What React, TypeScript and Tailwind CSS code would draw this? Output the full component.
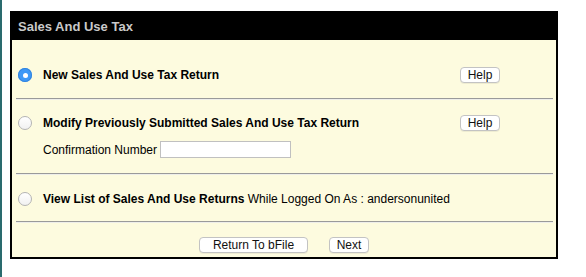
import React from 'react';

const FONT = { fontFamily: '"Liberation Sans", Arial, Helvetica, sans-serif' };

function Radio({ checked = false }: { checked?: boolean }) {
  if (checked) {
    return (
      <span className="flex h-[14px] w-[14px] shrink-0 items-center justify-center rounded-full bg-[#3d98f7] shadow-[inset_0_0_0_1px_#3485de]">
        <span className="h-[5px] w-[5px] rounded-full bg-white" />
      </span>
    );
  }
  return (
    <span className="h-[14px] w-[14px] shrink-0 rounded-full border border-[#b4b4b4] bg-gradient-to-b from-white to-[#f1f1f1]" />
  );
}

function MacButton({ label, width }: { label: string; width: string }) {
  return (
    <button
      type="button"
      className={`${width} flex h-[16px] items-center justify-center rounded-[4px] border border-[#c3c3c3] bg-white text-[12px] leading-none text-[#111] shadow-[0_1px_0_rgba(0,0,0,0.06)]`}
    >
      {label}
    </button>
  );
}

function Separator() {
  return <div className="ml-[4px] mr-[3px] h-[2px] border-t border-[#9a9a9a] border-b border-b-[#eeeeea]" />;
}

export default function App() {
  return (
    <div style={FONT} className="h-[277px] w-[586px] border-l-2 border-[#2a6b6e] bg-white">
      <div className="ml-[8px] pt-[11px]">
        <div className="w-[548px] border-2 border-black bg-[#fdfbdf]">
          <div className="flex h-[27px] items-center bg-black pl-[6px]">
            <span className="text-[13px] font-bold text-[#c9c9c9]">Sales And Use Tax</span>
          </div>

          <div className="pb-[15px] pt-[27px]">
            <div className="flex h-[16px] items-center pl-[6px] pr-[56px]">
              <Radio checked />
              <span className="ml-[11px] flex-1 text-[12px] font-bold text-black">
                New Sales And Use Tax Return
              </span>
              <MacButton label="Help" width="w-[40px]" />
            </div>
          </div>
          <Separator />

          <div className="pb-[15px] pt-[15px]">
            <div className="flex h-[16px] items-center pl-[6px] pr-[56px]">
              <Radio />
              <span className="ml-[11px] flex-1 text-[12px] font-bold text-black">
                Modify Previously Submitted Sales And Use Tax Return
              </span>
              <MacButton label="Help" width="w-[40px]" />
            </div>
            <div className="mt-[10px] flex h-[17px] items-center pl-[31px]">
              <span className="text-[12px] text-black">Confirmation Number</span>
              <input
                type="text"
                className="ml-[3px] h-[17px] w-[131px] border border-[#c0c0c0] bg-white outline-none"
              />
            </div>
          </div>
          <Separator />

          <div className="pb-[14px] pt-[16px]">
            <div className="flex h-[16px] items-center pl-[6px]">
              <Radio />
              <span className="ml-[11px] text-[12px] text-black">
                <span className="font-bold">View List of Sales And Use Returns</span> While Logged On As : andersonunited
              </span>
            </div>
          </div>
          <Separator />

          <div className="flex justify-center gap-[21px] pb-[4px] pt-[14px]">
            <MacButton label="Return To bFile" width="w-[109px]" />
            <MacButton label="Next" width="w-[40px]" />
          </div>
        </div>
      </div>
    </div>
  );
}
